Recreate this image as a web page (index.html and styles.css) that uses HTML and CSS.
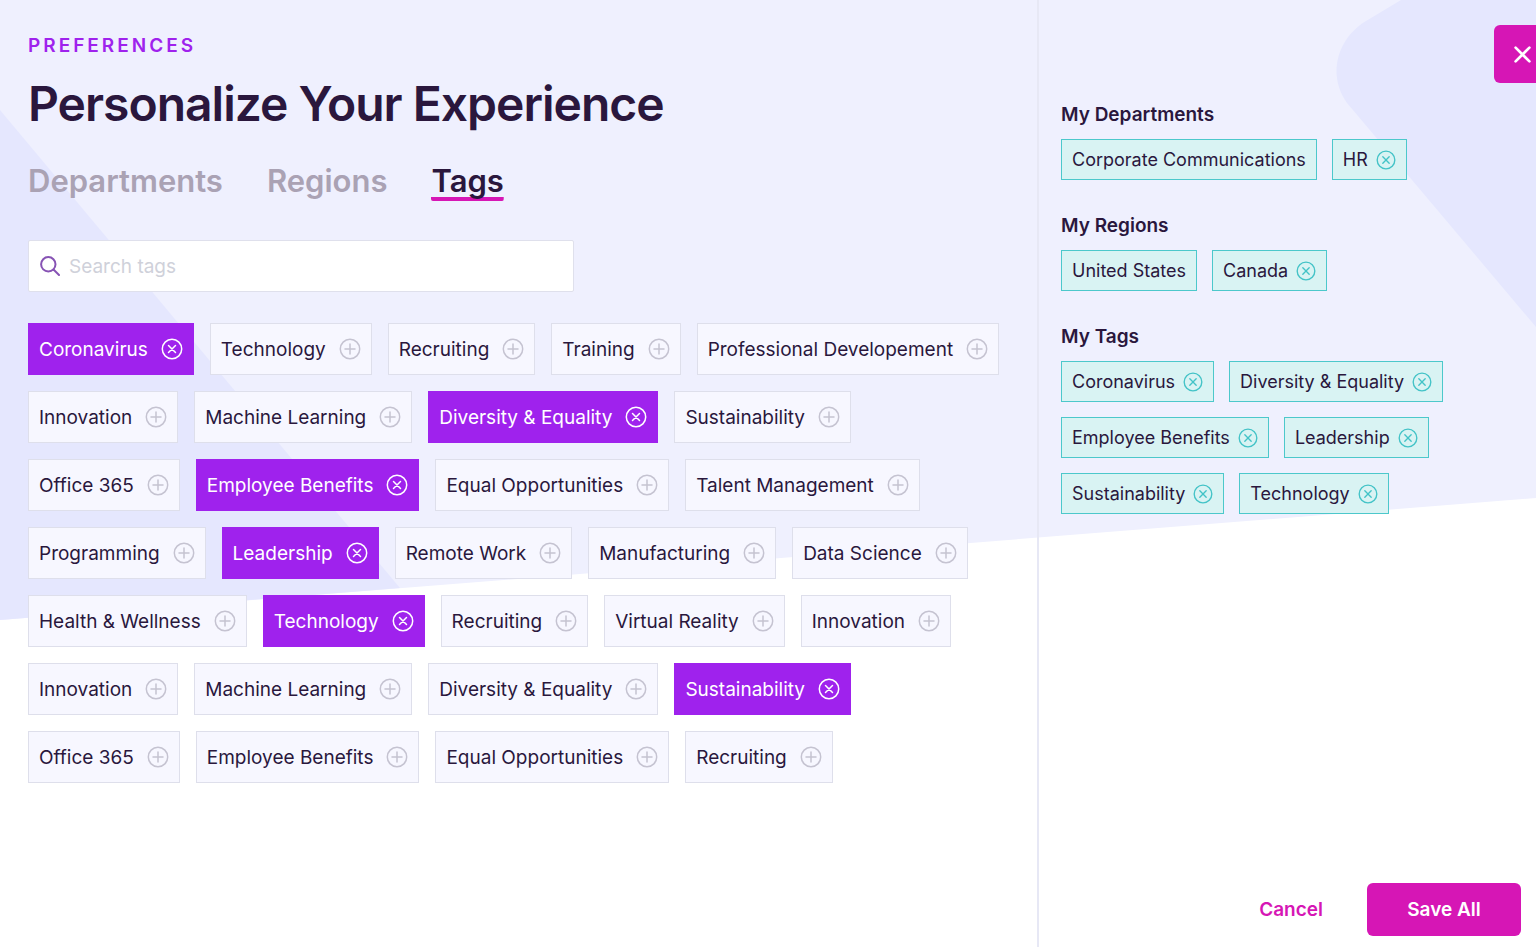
FILE: index.html
```html
<!DOCTYPE html>
<html lang="en">
<head>
<meta charset="utf-8">
<meta name="viewport" content="width=device-width, initial-scale=1">
<title>Personalize Your Experience</title>
<link rel="stylesheet" href="styles.css">
</head>
<body>
<svg class="symbols" aria-hidden="true">
  <symbol id="plus" viewBox="0 0 22 22"><circle cx="11" cy="11" r="9.7"/><path d="M11 6v10M6 11h10"/></symbol>
  <symbol id="remove" viewBox="0 0 22 22"><circle cx="11" cy="11" r="9.7"/><path d="M7.5 7.5l7 7M14.5 7.5l-7 7"/></symbol>
</svg>
<div class="page">
  <svg class="backdrop" viewBox="0 0 1536 947" preserveAspectRatio="none" aria-hidden="true">
    <path class="backdrop-base" d="M0 0H1536V498L0 620Z"/>
    <path class="backdrop-shade" d="M0 110L400 588L0 620Z"/>
    <path class="backdrop-shade" d="M1401 0L1366 21C1335 40 1328 77 1347 103L1536 327V0Z"/>
  </svg>
  <main class="editor">
    <p class="eyebrow">PREFERENCES</p>
    <h1 class="title">Personalize Your Experience</h1>
    <nav class="tabs" aria-label="Preference type">
      <a class="tab" href="#departments">Departments</a>
      <a class="tab" href="#regions">Regions</a>
      <a class="tab tab-active" href="#tags" aria-current="page">Tags</a>
    </nav>
    <label class="search">
      <svg class="search-icon" viewBox="0 0 20 20" aria-hidden="true"><circle cx="8.3" cy="8.3" r="7.2"/><path d="M13.5 13.5L19 19"/></svg>
      <input class="search-input" type="search" placeholder="Search tags" aria-label="Search tags">
    </label>
    <div class="tags">
      <button class="tag tag-on" aria-pressed="true">Coronavirus<svg class="icon"><use href="#remove"/></svg></button>
      <button class="tag" aria-pressed="false">Technology<svg class="icon"><use href="#plus"/></svg></button>
      <button class="tag" aria-pressed="false">Recruiting<svg class="icon"><use href="#plus"/></svg></button>
      <button class="tag" aria-pressed="false">Training<svg class="icon"><use href="#plus"/></svg></button>
      <button class="tag" aria-pressed="false">Professional Developement<svg class="icon"><use href="#plus"/></svg></button>
      <button class="tag" aria-pressed="false">Innovation<svg class="icon"><use href="#plus"/></svg></button>
      <button class="tag" aria-pressed="false">Machine Learning<svg class="icon"><use href="#plus"/></svg></button>
      <button class="tag tag-on" aria-pressed="true">Diversity &amp; Equality<svg class="icon"><use href="#remove"/></svg></button>
      <button class="tag" aria-pressed="false">Sustainability<svg class="icon"><use href="#plus"/></svg></button>
      <button class="tag" aria-pressed="false">Office 365<svg class="icon"><use href="#plus"/></svg></button>
      <button class="tag tag-on" aria-pressed="true">Employee Benefits<svg class="icon"><use href="#remove"/></svg></button>
      <button class="tag" aria-pressed="false">Equal Opportunities<svg class="icon"><use href="#plus"/></svg></button>
      <button class="tag" aria-pressed="false">Talent Management<svg class="icon"><use href="#plus"/></svg></button>
      <button class="tag" aria-pressed="false">Programming<svg class="icon"><use href="#plus"/></svg></button>
      <button class="tag tag-on" aria-pressed="true">Leadership<svg class="icon"><use href="#remove"/></svg></button>
      <button class="tag" aria-pressed="false">Remote Work<svg class="icon"><use href="#plus"/></svg></button>
      <button class="tag" aria-pressed="false">Manufacturing<svg class="icon"><use href="#plus"/></svg></button>
      <button class="tag" aria-pressed="false">Data Science<svg class="icon"><use href="#plus"/></svg></button>
      <button class="tag" aria-pressed="false">Health &amp; Wellness<svg class="icon"><use href="#plus"/></svg></button>
      <button class="tag tag-on" aria-pressed="true">Technology<svg class="icon"><use href="#remove"/></svg></button>
      <button class="tag" aria-pressed="false">Recruiting<svg class="icon"><use href="#plus"/></svg></button>
      <button class="tag" aria-pressed="false">Virtual Reality<svg class="icon"><use href="#plus"/></svg></button>
      <button class="tag" aria-pressed="false">Innovation<svg class="icon"><use href="#plus"/></svg></button>
      <button class="tag" aria-pressed="false">Innovation<svg class="icon"><use href="#plus"/></svg></button>
      <button class="tag" aria-pressed="false">Machine Learning<svg class="icon"><use href="#plus"/></svg></button>
      <button class="tag" aria-pressed="false">Diversity &amp; Equality<svg class="icon"><use href="#plus"/></svg></button>
      <button class="tag tag-on" aria-pressed="true">Sustainability<svg class="icon"><use href="#remove"/></svg></button>
      <button class="tag" aria-pressed="false">Office 365<svg class="icon"><use href="#plus"/></svg></button>
      <button class="tag" aria-pressed="false">Employee Benefits<svg class="icon"><use href="#plus"/></svg></button>
      <button class="tag" aria-pressed="false">Equal Opportunities<svg class="icon"><use href="#plus"/></svg></button>
      <button class="tag" aria-pressed="false">Recruiting<svg class="icon"><use href="#plus"/></svg></button>
    </div>
  </main>
  <aside class="summary">
    <button class="close" aria-label="Close"><svg class="close-icon" viewBox="0 0 16 16" aria-hidden="true"><path d="M1.5 1.5l13 13M14.5 1.5l-13 13"/></svg></button>
    <section class="group">
      <h2 class="group-title">My Departments</h2>
      <div class="picks">
        <span class="pick">Corporate Communications</span>
        <button class="pick">HR<svg class="pick-icon"><use href="#remove"/></svg></button>
      </div>
    </section>
    <section class="group">
      <h2 class="group-title">My Regions</h2>
      <div class="picks">
        <span class="pick">United States</span>
        <button class="pick">Canada<svg class="pick-icon"><use href="#remove"/></svg></button>
      </div>
    </section>
    <section class="group">
      <h2 class="group-title">My Tags</h2>
      <div class="picks">
        <button class="pick">Coronavirus<svg class="pick-icon"><use href="#remove"/></svg></button>
        <button class="pick">Diversity &amp; Equality<svg class="pick-icon"><use href="#remove"/></svg></button>
        <button class="pick">Employee Benefits<svg class="pick-icon"><use href="#remove"/></svg></button>
        <button class="pick">Leadership<svg class="pick-icon"><use href="#remove"/></svg></button>
        <button class="pick">Sustainability<svg class="pick-icon"><use href="#remove"/></svg></button>
        <button class="pick">Technology<svg class="pick-icon"><use href="#remove"/></svg></button>
      </div>
    </section>
    <footer class="actions">
      <button class="cancel">Cancel</button>
      <button class="save">Save All</button>
    </footer>
  </aside>
</div>
</body>
</html>
```
FILE: styles.css
```css
* { box-sizing: border-box; }

body {
  margin: 0;
  background: #fff;
  color: #2a173d;
  font-family: Inter, "Open Sans", sans-serif;
}

button {
  font: inherit;
  color: inherit;
  margin: 0;
  cursor: pointer;
}

.symbols {
  position: absolute;
  width: 0;
  height: 0;
}

.page {
  position: relative;
  display: grid;
  grid-template-columns: minmax(0, 1fr) 499px;
  min-height: 100vh;
}

.backdrop {
  position: absolute;
  inset: 0;
  width: 100%;
  height: 100%;
  z-index: -1;
}

.backdrop-base { fill: #eff0fe; }
.backdrop-shade { fill: #e5e7fe; }

.editor { padding: 34px 28px; }

.eyebrow {
  margin: 0;
  color: #9f22ed;
  font-size: 19px;
  font-weight: 600;
  line-height: 24px;
  letter-spacing: 3px;
}

.title {
  margin: 14px 0 0;
  font-size: 48px;
  font-weight: 600;
  line-height: 64px;
  letter-spacing: -1px;
}

.tabs {
  display: flex;
  gap: 44px;
  margin-top: 25px;
}

.tab {
  color: #aaa2b4;
  font-size: 31px;
  font-weight: 600;
  line-height: 40px;
  text-decoration: none;
  border-radius: 2px;
}

.tab-active {
  color: #2a173d;
  background: linear-gradient(#d616b5, #d616b5) bottom / 100% 4px no-repeat;
}

.search {
  display: flex;
  align-items: center;
  gap: 9px;
  max-width: 546px;
  height: 52px;
  margin-top: 39px;
  padding: 0 11px;
  background: #fff;
  border: 1px solid #dfe0ec;
  border-radius: 2px;
}

.search-icon {
  flex: none;
  width: 20px;
  height: 20px;
  fill: none;
  stroke: #8753b4;
  stroke-width: 2;
  stroke-linecap: round;
}

.search-input {
  flex: 1;
  min-width: 0;
  padding: 0;
  border: 0;
  outline: 0;
  background: none;
  color: inherit;
  font: inherit;
  font-size: 19px;
}

.search-input::placeholder { color: #cfd1da; }

.tags {
  display: flex;
  flex-wrap: wrap;
  gap: 16px;
  margin-top: 31px;
}

.tag {
  display: flex;
  align-items: center;
  gap: 13px;
  height: 52px;
  padding: 0 10px;
  background: #f7f7ff;
  border: 1px solid #dedfeb;
  font-size: 19px;
}

.tag-on {
  background: #9f22ed;
  border-color: #9f22ed;
  color: #fff;
}

.icon {
  width: 22px;
  height: 22px;
  fill: none;
  stroke: #c5c3d1;
  stroke-width: 1.5;
  stroke-linecap: round;
}

.tag-on .icon { stroke: #fff; }

.summary {
  position: relative;
  display: flex;
  flex-direction: column;
  padding: 103px 15px 11px 22px;
  border-left: 2px solid #e7e8f5;
}

.close {
  position: absolute;
  top: 25px;
  right: 0;
  display: flex;
  align-items: center;
  width: 42px;
  height: 58px;
  padding: 0 0 0 20px;
  background: #d616b5;
  border: 0;
  border-radius: 6px 0 0 6px;
}

.close-icon {
  flex: none;
  width: 17px;
  height: 17px;
  fill: none;
  stroke: #fff;
  stroke-width: 2.5;
  stroke-linecap: round;
}

.group { margin-bottom: 34px; }

.group-title {
  margin: 0 0 12px;
  font-size: 19px;
  font-weight: 600;
  line-height: 24px;
}

.picks {
  display: flex;
  flex-wrap: wrap;
  gap: 15px;
}

.pick {
  display: flex;
  align-items: center;
  gap: 8px;
  height: 41px;
  padding: 0 10px;
  background: #d9f3f3;
  border: 1px solid #4cc8cb;
  font-size: 18px;
}

.pick-icon {
  width: 20px;
  height: 20px;
  fill: none;
  stroke: #43c3c7;
  stroke-width: 1.5;
  stroke-linecap: round;
}

.actions {
  display: flex;
  justify-content: flex-end;
  align-items: center;
  gap: 44px;
  margin-top: auto;
  font-size: 19px;
  font-weight: 600;
}

.cancel {
  padding: 0;
  background: none;
  border: 0;
  color: #d616b5;
}

.save {
  width: 154px;
  height: 53px;
  padding: 0;
  background: #d616b5;
  border: 0;
  border-radius: 6px;
  color: #fff;
}
```
